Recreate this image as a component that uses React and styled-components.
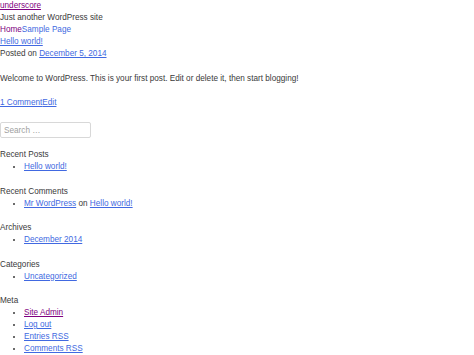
import styled, { createGlobalStyle } from "styled-components";

const GlobalStyle = createGlobalStyle`
  html, body {
    margin: 0;
    padding: 0;
    background: #fff;
  }

  body {
    font-family: "Liberation Sans", Arial, sans-serif;
    font-size: 8.2px;
    line-height: 12px;
    color: #3a3a3a;
  }
`;

const Page = styled.div`
  display: flex;
  flex-direction: column;
`;

const Link = styled.a`
  color: ${props => (props.$visited ? "#800080" : "#4169e1")};
  text-decoration: underline;
`;

const NavLink = styled(Link)`
  text-decoration: none;
`;

const Header = styled.header`
  display: flex;
  flex-direction: column;
`;

const Line = styled.div`
  margin: 0;
`;

const Nav = styled.nav`
  display: flex;
`;

const Article = styled.article`
  display: flex;
  flex-direction: column;
`;

const Paragraph = styled.p`
  margin: 12.5px 0;
`;

const SearchForm = styled.form`
  display: flex;
  margin: 13px 0 11px;
`;

const SearchInput = styled.input`
  box-sizing: border-box;
  width: 91px;
  height: 16px;
  padding: 0 3px;
  border: 1px solid #d8d8d8;
  border-radius: 2px;
  font-family: "Liberation Sans", Arial, sans-serif;
  font-size: 8.2px;
  color: #404040;
  outline: none;

  &::placeholder {
    color: #a0a0a0;
  }
`;

const Widget = styled.section`
  margin-bottom: 12.5px;
`;

const WidgetTitle = styled.h2`
  margin: 0;
  font-size: 8.2px;
  font-weight: normal;
  line-height: 12px;
`;

const WidgetList = styled.ul`
  margin: 0;
  padding-left: 24px;
  list-style: disc;
`;

const Item = styled.li`
  line-height: 12px;
`;

const widgets = [
  { title: "Recent Posts", items: [[{ text: "Hello world!" }]] },
  {
    title: "Recent Comments",
    items: [[{ text: "Mr WordPress" }, " on ", { text: "Hello world!" }]],
  },
  { title: "Archives", items: [[{ text: "December 2014" }]] },
  { title: "Categories", items: [[{ text: "Uncategorized" }]] },
  {
    title: "Meta",
    items: [
      [{ text: "Site Admin", visited: true }],
      [{ text: "Log out" }],
      [{ text: "Entries RSS" }],
      [{ text: "Comments RSS" }],
    ],
  },
];

export default function App() {
  return (
    <>
      <GlobalStyle />
      <Page>
        <Header>
          <Line>
            <Link href="#" $visited>
              underscore
            </Link>
          </Line>
          <Line>Just another WordPress site</Line>
          <Nav>
            <NavLink href="#" $visited>
              Home
            </NavLink>
            <NavLink href="#">Sample Page</NavLink>
          </Nav>
        </Header>

        <Article>
          <Line>
            <Link href="#">Hello world!</Link>
          </Line>
          <Line>
            Posted on <Link href="#">December 5, 2014</Link>
          </Line>
          <Paragraph>
            Welcome to WordPress. This is your first post. Edit or delete it,
            then start blogging!
          </Paragraph>
          <Line>
            <Link href="#">1 Comment</Link>
            <Link href="#">Edit</Link>
          </Line>
        </Article>

        <aside>
          <SearchForm onSubmit={e => e.preventDefault()}>
            <SearchInput type="search" placeholder="Search …" />
          </SearchForm>

          {widgets.map(widget => (
            <Widget key={widget.title}>
              <WidgetTitle>{widget.title}</WidgetTitle>
              <WidgetList>
                {widget.items.map((parts, i) => (
                  <Item key={i}>
                    {parts.map((part, j) =>
                      typeof part === "string" ? (
                        part
                      ) : (
                        <Link key={j} href="#" $visited={part.visited}>
                          {part.text}
                        </Link>
                      )
                    )}
                  </Item>
                ))}
              </WidgetList>
            </Widget>
          ))}
        </aside>
      </Page>
    </>
  );
}
